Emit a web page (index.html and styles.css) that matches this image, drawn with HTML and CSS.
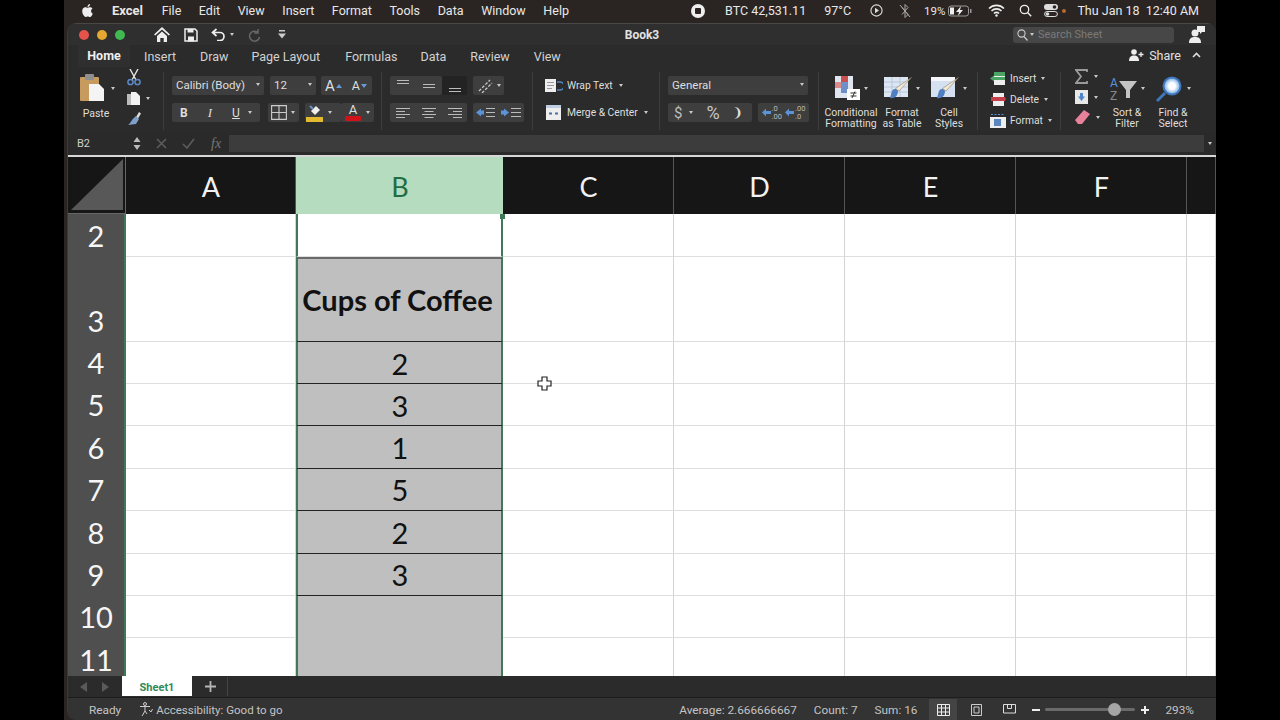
FILE: index.html
```html
<!DOCTYPE html>
<html>
<head>
<title>Book3</title>
<link rel="stylesheet" href="styles.css">
</head>
<body>
<div class="screen">

  <!-- mac menu bar -->
  <div class="menubar">
    <svg class="apple" viewBox="0 0 24 24"><path fill="#eee" d="M12.152 6.896c-.948 0-2.415-1.078-3.96-1.04-2.04.027-3.91 1.183-4.961 3.014-2.117 3.675-.546 9.103 1.519 12.09 1.013 1.454 2.208 3.09 3.792 3.039 1.52-.065 2.09-.987 3.935-.987 1.831 0 2.35.987 3.96.948 1.637-.026 2.676-1.48 3.676-2.948 1.156-1.688 1.636-3.325 1.662-3.415-.039-.013-3.182-1.221-3.22-4.857-.026-3.04 2.48-4.494 2.597-4.559-1.429-2.09-3.623-2.324-4.39-2.376-2-.156-3.675 1.09-4.61 1.09zM15.53 3.83c.843-1.012 1.4-2.427 1.245-3.83-1.207.052-2.662.805-3.532 1.818-.78.896-1.454 2.338-1.273 3.714 1.338.104 2.715-.688 3.559-1.701"/></svg>
    <div class="menu-items">
      <b>Excel</b><span>File</span><span>Edit</span><span>View</span><span>Insert</span><span>Format</span><span>Tools</span><span>Data</span><span>Window</span><span>Help</span>
    </div>
    <div class="menu-status">
      <svg class="st-record" width="14" height="14" viewBox="0 0 14 14"><circle cx="7" cy="7" r="7" fill="#eee"/><rect x="4" y="4" width="6" height="6" rx="1" fill="#2a2523"/></svg>
      <span class="st-btc">BTC 42,531.11</span>
      <span class="st-temp">97°C</span>
      <svg class="st-play" width="13" height="13" viewBox="0 0 13 13"><circle cx="6.5" cy="6.5" r="5.6" fill="none" stroke="#ddd" stroke-width="1.1"/><path d="M5 3.8l4 2.7-4 2.7z" fill="#ddd"/></svg>
      <svg class="st-bt" width="12" height="14" viewBox="0 0 12 14"><path d="M3 3.5l6 7-3 3V.5l3 3-6 7" fill="none" stroke="#aaa" stroke-width="1"/><path d="M1 1l10 12" stroke="#aaa"/></svg>
      <span class="st-pct">19%</span>
      <svg class="st-batt" width="24" height="12" viewBox="0 0 24 12"><rect x=".5" y="1" width="20" height="10" rx="2.5" fill="none" stroke="#999"/><rect x="2" y="2.5" width="4" height="7" fill="#eee"/><path d="M13 1L8 7h3l-1 4 5-6h-3z" fill="#eee"/><rect x="22" y="4" width="1.5" height="4" fill="#999"/></svg>
      <svg class="st-wifi" width="17" height="13" viewBox="0 0 17 13"><path d="M1 4.500a10.500 10.500 0 0 1 15 0M3.500 7a7 7 0 0 1 10 0M6 9.500a3.400 3.400 0 0 1 5 0" fill="none" stroke="#eee" stroke-width="1.600"/><circle cx="8.500" cy="11.500" r="1.200" fill="#eee"/></svg>
      <svg class="st-search" width="13" height="13" viewBox="0 0 13 13"><circle cx="5.500" cy="5.500" r="4.200" fill="none" stroke="#eee" stroke-width="1.300"/><path d="M8.600 8.600l3.600 3.600" stroke="#eee" stroke-width="1.400"/></svg>
      <svg class="st-ctl" width="14" height="13" viewBox="0 0 14 13"><rect x="0" y="0" width="14" height="6" rx="3" fill="#ddd"/><circle cx="10.500" cy="3" r="1.800" fill="#2a2523"/><rect x=".6" y="7.500" width="12.800" height="5" rx="2.500" fill="none" stroke="#ddd"/><circle cx="3.500" cy="10" r="1.800" fill="#ddd"/></svg>
      <span class="st-dot"></span>
      <span class="st-date">Thu Jan 18&nbsp; 12:40 AM</span>
    </div>
  </div>

  <div class="window">

    <div class="titlebar">
      <div class="title-left">
        <div class="lights"><i class="red"></i><i class="yellow"></i><i class="green"></i></div>
        <svg class="qa-home" width="16" height="15" viewBox="0 0 16 15"><path d="M8 0L0 7.500l1.200 1.100L8 2.400l6.800 6.200L16 7.500z" fill="#eee"/><path d="M3 9l5-4.500L13 9v6H9.700v-4H6.300v4H3z" fill="#eee"/></svg>
        <svg class="qa-save" width="14" height="14" viewBox="0 0 14 14"><path d="M1 1h10l2 2v10H1z" fill="none" stroke="#eee" stroke-width="1.500"/><rect x="3.500" y="1" width="6" height="3.500" fill="#eee"/><rect x="4" y="8.500" width="6" height="5" fill="#eee"/></svg>
        <svg class="qa-undo" width="15" height="13" viewBox="0 0 15 13"><path d="M5.500 1L1.500 4.500 5.500 8M2 4.500h7a4 4 0 0 1 0 8H6" fill="none" stroke="#eee" stroke-width="1.700"/></svg>
        <i class="caret qa-caret"></i>
        <svg class="qa-redo" width="14" height="14" viewBox="0 0 14 14"><path d="M10 1v4H6M10 4.500A5 5 0 1 0 11.500 9" fill="none" stroke="#666" stroke-width="1.500"/></svg>
        <svg class="qa-more" width="8" height="9" viewBox="0 0 8 9"><rect x="1" y="0" width="6" height="1.500" fill="#ccc"/><path d="M0 3.500h8L4 8.500z" fill="#ccc"/></svg>
      </div>
      <div class="doc-title">Book3</div>
      <div class="title-right">
        <div class="search">
          <svg width="11" height="12" viewBox="0 0 11 12"><circle cx="4.500" cy="4.500" r="3.600" fill="none" stroke="#ccc" stroke-width="1.100"/><path d="M7 7.500l3.500 4" stroke="#ccc" stroke-width="1.200"/></svg>
          <i class="caret"></i>
          <span>Search Sheet</span>
        </div>
        <svg class="profile" width="16" height="17" viewBox="0 0 16 17"><circle cx="6" cy="7" r="3.500" fill="#eee"/><path d="M0 17c0-5 2.500-6 6-6s6 1 6 6z" fill="#eee"/><path d="M8 0h8v6h-3l-2 2V6H8z" fill="#eee"/></svg>
      </div>
    </div>

    <div class="tabs">
      <div class="tab tab-home">Home</div>
      <div class="tab t-insert">Insert</div>
      <div class="tab t-draw">Draw</div>
      <div class="tab t-page">Page Layout</div>
      <div class="tab t-formulas">Formulas</div>
      <div class="tab t-data">Data</div>
      <div class="tab t-review">Review</div>
      <div class="tab t-view">View</div>
      <div class="share">
        <svg width="15" height="12" viewBox="0 0 15 12"><circle cx="5" cy="3" r="2.800" fill="#eee"/><path d="M0 12c0-4 2-5.500 5-5.500s5 1.500 5 5.500z" fill="#eee"/><path d="M9.500 5.500h5M12 3v5" stroke="#eee" stroke-width="1.300"/></svg>
        <span>Share</span>
        <svg class="chev" width="9" height="6" viewBox="0 0 9 6"><path d="M1 5l3.500-3.500L8 5" fill="none" stroke="#ddd" stroke-width="1.600"/></svg>
      </div>
    </div>

    <div class="ribbon">

      <div class="group g-clip">
        <div class="paste">
          <div class="paste-top">
            <svg width="25" height="28" viewBox="0 0 25 28"><rect x="0" y="3" width="19" height="24" rx="1" fill="#c79a5e"/><rect x="5" y="0" width="9" height="6" rx="1" fill="#8f8f8f"/><path d="M9 10h10l5 5v12H9z" fill="#f4f4f4"/></svg>
            <i class="caret"></i>
          </div>
          <div class="paste-label">Paste</div>
        </div>
        <div class="clip-tools">
          <svg width="14" height="17" viewBox="0 0 14 17"><path d="M3 0l6 11M11 0L5 11" stroke="#e4e4e4" stroke-width="1.400"/><circle cx="3.500" cy="13" r="2.600" fill="none" stroke="#5d8ac7" stroke-width="1.500"/><circle cx="10.500" cy="13" r="2.600" fill="none" stroke="#5d8ac7" stroke-width="1.500"/></svg>
          <div class="clip-row">
            <svg width="13" height="15" viewBox="0 0 13 15"><rect x="0" y="3" width="8" height="11" fill="#bbb"/><path d="M4 1h5l4 4v9H4z" fill="#f2f2f2"/></svg>
            <i class="caret"></i>
          </div>
          <svg width="15" height="15" viewBox="0 0 15 15"><path d="M9 6l3-5 2 1.500-3 5z" fill="#ddd"/><path d="M9 5l3 3-3 5-8 1c3-2 3-5 8-9z" fill="#7ea0c9"/></svg>
        </div>
      </div>

      <div class="group g-font">
        <div class="row">
          <div class="ctl sel-font"><span>Calibri (Body)</span><i class="caret"></i></div>
          <div class="ctl sel-size"><span>12</span><i class="caret"></i></div>
          <div class="ctl grow-box">
            <span class="big-a">A</span><i class="up"></i>
            <span class="small-a">A</span><i class="down"></i>
          </div>
        </div>
        <div class="row">
          <div class="ctl biu"><b>B</b><em>I</em><u>U</u><i class="caret"></i></div>
          <div class="ctl border-box">
            <svg width="16" height="15" viewBox="0 0 16 15"><path d="M.6.6h14.800v13.800H.6zM8 .6v13.800M.6 7.500h14.800" fill="none" stroke="#ccc" stroke-width="1.100"/></svg>
            <i class="caret"></i>
          </div>
          <div class="ctl fill-box">
            <svg width="17" height="18" viewBox="0 0 17 18"><path d="M5 7l5-5 4 4-5 5z" fill="#eee"/><path d="M4 2l3 3" stroke="#6a93c9" stroke-width="2"/><rect x="0" y="13" width="17" height="5" fill="#e3b92f"/></svg>
            <i class="caret"></i>
          </div>
          <div class="ctl color-box">
            <div class="color-a"><span>A</span><i></i></div>
            <i class="caret"></i>
          </div>
        </div>
      </div>

      <div class="group g-align">
        <div class="row">
          <div class="ctl va-box">
            <svg width="26" height="19" viewBox="0 0 26 19"><path d="M7 4.500h12M7 7.500h12" stroke="#bbb" stroke-width="1.100"/></svg>
            <svg width="26" height="19" viewBox="0 0 26 19"><path d="M7 8.500h12M7 11.500h12" stroke="#bbb" stroke-width="1.100"/></svg>
          </div>
          <div class="ctl va-on">
            <svg width="25" height="19" viewBox="0 0 25 19"><path d="M7 12.500h12M7 15.500h12" stroke="#bbb" stroke-width="1.100"/></svg>
          </div>
          <div class="ctl orient">
            <svg width="17" height="15" viewBox="0 0 17 15"><path d="M2 13L13 2M5 15L15 5" stroke="#c9c9c9" stroke-width="1.300" stroke-dasharray="3 1.500"/></svg>
            <i class="caret"></i>
          </div>
        </div>
        <div class="row">
          <div class="ctl ha-box">
            <svg width="26" height="19" viewBox="0 0 26 19"><path d="M6 5.500h14M6 8.500h9M6 11.500h14M6 14.500h9" stroke="#bbb"/></svg>
            <svg width="26" height="19" viewBox="0 0 26 19"><path d="M6 5.500h14M8.500 8.500h9M6 11.500h14M8.500 14.500h9" stroke="#bbb"/></svg>
            <svg width="25" height="19" viewBox="0 0 25 19"><path d="M6 5.500h14M11 8.500h9M6 11.500h14M11 14.500h9" stroke="#bbb"/></svg>
          </div>
          <div class="ctl indent-box">
            <svg width="25" height="19" viewBox="0 0 25 19"><path d="M13 5.500h9M13 9.500h9M13 13.500h9" stroke="#bbb"/><path d="M3 9.500l5-4v8z" fill="#5b93d6"/><path d="M8 7.500h3v4H8z" fill="#5b93d6"/></svg>
            <svg width="26" height="19" viewBox="0 0 26 19"><path d="M13 5.500h10M13 9.500h10M13 13.500h10" stroke="#bbb"/><path d="M11 9.500l-5-4v8z" fill="#5b93d6"/><path d="M3 7.500h3v4H3z" fill="#5b93d6"/></svg>
          </div>
        </div>
      </div>

      <div class="group g-wrap">
        <div class="row wrap-row">
          <svg width="18" height="15" viewBox="0 0 18 15"><rect x="0" y="1" width="11" height="13" fill="#eee"/><path d="M2 4.500h7M2 7.500h7M2 10.500h5" stroke="#999"/><path d="M12 4h3a2.500 2.500 0 0 1 0 8h-3" fill="none" stroke="#4f86c8" stroke-width="1.600"/></svg>
          <span>Wrap Text</span><i class="caret"></i>
        </div>
        <div class="row wrap-row">
          <svg width="18" height="15" viewBox="0 0 18 15"><rect x="1" y="0" width="15" height="15" fill="#eee"/><rect x="1" y="0" width="15" height="3" fill="#bfcfe3"/><path d="M4 8.500h3M10 8.500h3" stroke="#47719f" stroke-width="2"/></svg>
          <span>Merge &amp; Center</span><i class="caret"></i>
        </div>
      </div>

      <div class="group g-num">
        <div class="row">
          <div class="ctl sel-num"><span>General</span><i class="caret"></i></div>
        </div>
        <div class="row">
          <div class="ctl money">
            <span class="dollar">$</span><i class="caret"></i>
            <span class="pct">%</span>
            <span class="comma">❩</span>
          </div>
          <div class="ctl dec-box">
            <div class="dec"><svg width="9" height="9" viewBox="0 0 9 9"><path d="M0 4.500l4-4v2.500h5v3H4v2.500z" fill="#5b93d6"/></svg><span>.0<br>.00</span></div>
            <div class="dec"><svg width="9" height="9" viewBox="0 0 9 9"><path d="M0 4.500l4-4v2.500h5v3H4v2.500z" fill="#5b93d6"/></svg><span>.00<br>.0</span></div>
          </div>
        </div>
      </div>

      <div class="group g-styles">
        <div class="big-btn b-cond">
          <div class="big-icon">
            <svg width="25" height="24" viewBox="0 0 25 24"><rect x="0" y="0" width="18" height="22" fill="#dfe6f0"/><rect x="6" y="0" width="7" height="9" fill="#c9504f"/><rect x="6" y="6" width="7" height="11" fill="#6f8fc9"/><rect x="0" y="6" width="6" height="6" fill="#d98a8a"/><rect x="12" y="13" width="13" height="11" fill="#fff"/><path d="M15.500 17h6M15.500 20h6M20 15.500l-3 6.500" stroke="#333"/></svg>
            <i class="caret"></i>
          </div>
          <div class="big-label">Conditional<br>Formatting</div>
        </div>
        <div class="big-btn b-table">
          <div class="big-icon">
            <svg width="28" height="25" viewBox="0 0 28 25"><rect x="0" y="1" width="24" height="20" fill="#dde6f3"/><path d="M0 6h24M0 11h24M0 16h24M8 1v20M16 1v20" stroke="#b9c6db"/><path d="M27.500 1.500L15 15l-3.500-2.500z" fill="#f2ead6" stroke="#8f8468" stroke-width=".6"/><path d="M14 15c-2-3-5-2-6 0l-2 7c4 1 8-2 8-7z" fill="#4f7fc0"/></svg>
            <i class="caret"></i>
          </div>
          <div class="big-label">Format<br>as Table</div>
        </div>
        <div class="big-btn b-cell">
          <div class="big-icon">
            <svg width="28" height="25" viewBox="0 0 28 25"><rect x="0" y="1" width="24" height="20" fill="#d5e0f0"/><rect x="0" y="1" width="24" height="4" fill="#f4f6fa"/><path d="M27.500 1.500L15 15l-3.500-2.500z" fill="#f2ead6" stroke="#8f8468" stroke-width=".6"/><path d="M14 15c-2-3-5-2-6 0l-2 7c4 1 8-2 8-7z" fill="#4f7fc0"/></svg>
            <i class="caret"></i>
          </div>
          <div class="big-label">Cell<br>Styles</div>
        </div>
      </div>

      <div class="group g-cells">
        <div class="cell-btn">
          <svg width="16" height="15" viewBox="0 0 16 15"><rect x="4" y="1" width="11" height="13" fill="#eee"/><rect x="4" y="1" width="11" height="4" fill="#4aa463"/><rect x="4" y="6" width="11" height="3" fill="#4aa463"/><path d="M0 7.500l4-3v6z" fill="#4aa463"/></svg>
          <span>Insert</span><i class="caret"></i>
        </div>
        <div class="cell-btn">
          <svg width="16" height="15" viewBox="0 0 16 15"><rect x="3" y="1" width="11" height="13" fill="#eee"/><rect x="1" y="5" width="14" height="4" fill="#c4404a"/><path d="M15 5l1 2-1 2z" fill="#c4404a"/></svg>
          <span>Delete</span><i class="caret"></i>
        </div>
        <div class="cell-btn">
          <svg width="16" height="15" viewBox="0 0 16 15"><path d="M1 1.500h14" stroke="#5b93d6" stroke-dasharray="2 1.500"/><rect x="0" y="4" width="16" height="11" fill="#eee"/><rect x="4" y="6" width="7" height="7" fill="#5b86bd"/></svg>
          <span>Format</span><i class="caret"></i>
        </div>
      </div>

      <div class="group g-edit">
        <div class="edit-tools">
          <div class="clip-row">
            <svg width="13" height="15" viewBox="0 0 13 15"><path d="M12 3V1H1l5 6.500L1 14h11v-2" fill="none" stroke="#9a9a9a" stroke-width="1.800"/></svg>
            <i class="caret"></i>
          </div>
          <div class="clip-row">
            <svg width="13" height="14" viewBox="0 0 13 14"><rect x="0" y="0" width="13" height="14" fill="#e8e8e8"/><path d="M6.500 11L3 6.500h2V3h3v3.500h2z" fill="#4f86c8"/></svg>
            <i class="caret"></i>
          </div>
          <div class="clip-row">
            <svg width="15" height="14" viewBox="0 0 15 14"><path d="M9 0l6 4-8 10H3L0 10z" fill="#e8829b"/></svg>
            <i class="caret"></i>
          </div>
        </div>
        <div class="big-btn b-sort">
          <div class="big-icon">
            <svg width="27" height="26" viewBox="0 0 27 26"><text x="0" y="11" class="az-a">A</text><text x="0" y="24" class="az-z">Z</text><path d="M9 5h18l-7 9v8h-4v-8z" fill="#c4c4c4"/></svg>
            <i class="caret"></i>
          </div>
          <div class="big-label">Sort &amp;<br>Filter</div>
        </div>
        <div class="big-btn b-find">
          <div class="big-icon">
            <svg width="27" height="27" viewBox="0 0 27 27"><defs><radialGradient id="glass"><stop offset="45%" stop-color="#fbfdff"/><stop offset="100%" stop-color="#86b4e6"/></radialGradient></defs><circle cx="16" cy="10" r="9.500" fill="#3f77bd"/><circle cx="16" cy="10" r="7.500" fill="url(#glass)"/><path d="M9 17l-8 8" stroke="#3f77bd" stroke-width="3"/></svg>
            <i class="caret"></i>
          </div>
          <div class="big-label">Find &amp;<br>Select</div>
        </div>
      </div>
    </div>

    <div class="formula">
      <div class="name-box">B2</div>
      <svg class="stepper" width="8" height="15" viewBox="0 0 8 15"><path d="M4 1l3.500 5H.5zM4 14L.5 9h7z" fill="#bbb"/></svg>
      <svg class="f-x" width="11" height="11" viewBox="0 0 11 11"><path d="M1 1l9 9M10 1l-9 9" stroke="#5c5c5c" stroke-width="1.600"/></svg>
      <svg class="f-check" width="13" height="11" viewBox="0 0 13 11"><path d="M1 6l4 4 7-9" fill="none" stroke="#5c5c5c" stroke-width="1.600"/></svg>
      <span class="f-fx">fx</span>
      <div class="f-input"></div>
      <i class="caret f-caret"></i>
    </div>

    <div class="sheet">
      <div class="grid">
        <div class="corner"><svg width="56" height="54" viewBox="0 0 56 54"><path d="M55 2v51H3z" fill="#585858"/></svg></div>
        <div class="col-head">A</div>
        <div class="col-head on">B</div>
        <div class="col-head">C</div>
        <div class="col-head">D</div>
        <div class="col-head">E</div>
        <div class="col-head">F</div>
        <div class="col-head"></div>

        <div class="row-head">2</div>
        <div class="cell"></div><div class="cell b-col"></div><div class="cell"></div><div class="cell"></div><div class="cell"></div><div class="cell"></div><div class="cell"></div>

        <div class="row-head">3</div>
        <div class="cell"></div><div class="cell b-col sel title-cell">Cups of Coffee</div><div class="cell"></div><div class="cell"></div><div class="cell"></div><div class="cell"></div><div class="cell"></div>

        <div class="row-head">4</div>
        <div class="cell"></div><div class="cell b-col sel">2</div><div class="cell"></div><div class="cell"></div><div class="cell"></div><div class="cell"></div><div class="cell"></div>

        <div class="row-head">5</div>
        <div class="cell"></div><div class="cell b-col sel">3</div><div class="cell"></div><div class="cell"></div><div class="cell"></div><div class="cell"></div><div class="cell"></div>

        <div class="row-head">6</div>
        <div class="cell"></div><div class="cell b-col sel">1</div><div class="cell"></div><div class="cell"></div><div class="cell"></div><div class="cell"></div><div class="cell"></div>

        <div class="row-head">7</div>
        <div class="cell"></div><div class="cell b-col sel">5</div><div class="cell"></div><div class="cell"></div><div class="cell"></div><div class="cell"></div><div class="cell"></div>

        <div class="row-head">8</div>
        <div class="cell"></div><div class="cell b-col sel">2</div><div class="cell"></div><div class="cell"></div><div class="cell"></div><div class="cell"></div><div class="cell"></div>

        <div class="row-head">9</div>
        <div class="cell"></div><div class="cell b-col sel">3</div><div class="cell"></div><div class="cell"></div><div class="cell"></div><div class="cell"></div><div class="cell"></div>

        <div class="row-head">10</div>
        <div class="cell"></div><div class="cell b-col sel empty"></div><div class="cell"></div><div class="cell"></div><div class="cell"></div><div class="cell"></div><div class="cell"></div>

        <div class="row-head">11</div>
        <div class="cell"></div><div class="cell b-col sel empty"></div><div class="cell"></div><div class="cell"></div><div class="cell"></div><div class="cell"></div><div class="cell"></div>
      </div>
      <div class="handle"></div>
      <svg class="cursor" width="15" height="15" viewBox="0 0 15 15"><path d="M5 1h5v4h4v5h-4v4H5v-4H1V5h4z" fill="#fff" stroke="#222" stroke-width="1.200"/></svg>
    </div>

    <div class="sheetbar">
      <svg class="arrow" width="8" height="10" viewBox="0 0 8 10"><path d="M7 0v10L0 5z" fill="#5a5a5a"/></svg>
      <svg class="arrow" width="8" height="10" viewBox="0 0 8 10"><path d="M1 0v10l7-5z" fill="#5a5a5a"/></svg>
      <div class="sheet-tab">Sheet1</div>
      <svg class="add" width="11" height="11" viewBox="0 0 11 11"><path d="M5.500 0v11M0 5.500h11" stroke="#b5b5b5" stroke-width="1.800"/></svg>
      <div class="bar-sep"></div>
    </div>

    <div class="statusbar">
      <span class="ready">Ready</span>
      <svg class="a11y" width="14" height="15" viewBox="0 0 14 15"><circle cx="6" cy="2" r="1.500" fill="none" stroke="#ccc"/><path d="M1 4.500h10M6 5v4M6 9l-3 5M6 9l2 3M10 8l2 2 1.500-3" fill="none" stroke="#ccc"/></svg>
      <span class="a11y-text">Accessibility: Good to go</span>
      <div class="stats">
        <span>Average: 2.666666667</span>
        <span>Count: 7</span>
        <span>Sum: 16</span>
      </div>
      <div class="views">
        <div class="view on"><svg width="13" height="12" viewBox="0 0 13 12"><path d="M.5.500h12v11H.5zM.5 4h12M.5 8h12M4.500.5v11M8.500.5v11" fill="none" stroke="#eee"/></svg></div>
        <div class="view"><svg width="11" height="12" viewBox="0 0 11 12"><path d="M.5.500h10v11H.5zM3 3h5v6H3z" fill="none" stroke="#ccc"/></svg></div>
        <div class="view"><svg width="13" height="12" viewBox="0 0 13 12"><path d="M.5 9V.5h12V9zM4.500.5v4h4v-4" fill="none" stroke="#ddd"/></svg></div>
      </div>
      <svg class="z-minus" width="8" height="2" viewBox="0 0 8 2"><rect width="8" height="2" fill="#eee"/></svg>
      <div class="slider"><i></i></div>
      <svg class="z-plus" width="8" height="8" viewBox="0 0 8 8"><path d="M4 0v8M0 4h8" stroke="#eee" stroke-width="2"/></svg>
      <span class="zoom-pct">293%</span>
    </div>
  </div>
</div>
</body>
</html>
```

FILE: styles.css
```css
body {
  margin: 0;
  background-color: #000;
  font-family: "Roboto", "Liberation Sans", sans-serif;
  color: #dcdcdc;
}

.screen {
  width: 1152px;
  height: 720px;
  margin-left: 64px;
  display: flex;
  flex-direction: column;
  overflow: hidden;
  background-color: #2a2523;
}

.caret {
  display: inline-block;
  width: 0;
  height: 0;
  border-left: 2.5px solid transparent;
  border-right: 2.5px solid transparent;
  border-top: 3.5px solid #c8c8c8;
}

/* menu bar */
.menubar {
  height: 23px;
  flex: none;
  box-sizing: border-box;
  display: flex;
  align-items: center;
  padding: 0 17px 2px 17px;
  font-size: 12.5px;
  color: #e8e8e8;
}

.apple {
  width: 13px;
  height: 15px;
  margin-right: 18px;
}

.menu-items {
  display: flex;
  gap: 17.6px;
}

.menu-items b {
  font-size: 13px;
  margin-right: 1px;
}

.menu-status {
  margin-left: auto;
  display: flex;
  align-items: center;
}

.st-btc { margin-left: 20px; }
.st-temp { margin-left: 18px; }
.st-play { margin-left: 19px; }
.st-bt { margin-left: 16px; }
.st-pct { margin-left: 13px; font-size: 11.5px; }
.st-batt { margin-left: 3px; }
.st-wifi { margin-left: 16px; }
.st-search { margin-left: 14px; }
.st-ctl { margin-left: 12px; }
.st-date { margin-left: 11px; }

.st-dot {
  width: 4px;
  height: 4px;
  margin-left: 4px;
  border-radius: 50%;
  background-color: #b5692c;
}

/* window */
.window {
  flex: 1;
  min-height: 0;
  margin-left: 4px;
  display: flex;
  flex-direction: column;
  overflow: hidden;
  background-color: #2b2b2b;
  border-radius: 9px 9px 0 9px;
  box-shadow: -1px 0 0 #3a3a3a;
}

.titlebar {
  height: 22px;
  flex: none;
  box-sizing: border-box;
  padding-top: 1px;
  display: grid;
  grid-template-columns: 1fr auto 1fr;
  align-items: center;
  background-color: #2f2f2f;
  box-shadow: inset 0 1px 0 #484848;
}

.title-left {
  display: flex;
  align-items: center;
  padding-left: 11px;
}

.lights {
  display: flex;
  gap: 8px;
  margin-right: 29px;
}

.lights i {
  width: 10px;
  height: 10px;
  border-radius: 50%;
}

.lights .red { background-color: #e5534b; }
.lights .yellow { background-color: #e5a72f; }
.lights .green { background-color: #3fb950; }

.qa-save { margin-left: 14px; }
.qa-undo { margin-left: 13px; }
.qa-caret { margin-left: 4px; }
.qa-redo { margin-left: 14px; }
.qa-more { margin-left: 16px; }

.doc-title {
  font-size: 12px;
  font-weight: 700;
  color: #e2e2e2;
}

.title-right {
  display: flex;
  align-items: center;
  justify-content: flex-end;
  padding-right: 11px;
}

.search {
  width: 161px;
  height: 16px;
  margin-right: 15px;
  padding-left: 4px;
  box-sizing: border-box;
  display: flex;
  align-items: center;
  gap: 2px;
  background-color: #474747;
  border-radius: 3px;
  font-size: 11px;
  color: #7a7a7a;
}

.search span {
  margin-left: 2px;
}

.tabs {
  height: 22px;
  flex: none;
  display: flex;
  align-items: center;
  padding-right: 15px;
  font-size: 12.5px;
  color: #d2d2d2;
}

.tab { white-space: nowrap; }

.tab-home {
  width: 52px;
  height: 22px;
  margin-left: 10px;
  line-height: 22px;
  text-align: center;
  font-weight: 700;
  font-size: 12.5px;
  color: #f0f0f0;
  background-color: #2f2f2f;
}

.t-insert { margin-left: 14px; }
.t-draw { margin-left: 24px; }
.t-page { margin-left: 23px; }
.t-formulas { margin-left: 25px; }
.t-data { margin-left: 23px; }
.t-review { margin-left: 24px; }
.t-view { margin-left: 24px; }

.share {
  margin-left: auto;
  padding-bottom: 2px;
  display: flex;
  align-items: center;
  gap: 5px;
  font-size: 12.5px;
  color: #e0e0e0;
}

.chev { margin-left: 6px; }

/* ribbon */
.ribbon {
  height: 65px;
  flex: none;
  display: flex;
  background-color: #2b2b2b;
}

.group {
  height: 58px;
  margin-top: 5px;
  box-sizing: border-box;
  flex: none;
  border-right: 1px solid #3e3e3e;
}

.g-clip { width: 96px; padding-left: 12px; display: flex; }
.g-font { width: 218px; padding: 4px 0 0 8px; }
.g-align { width: 151px; padding: 4px 0 0 8px; }
.g-wrap { width: 127px; padding: 4px 0 0 12px; }
.g-num { width: 159px; padding: 4px 0 0 8px; }
.g-styles { width: 159px; padding-left: 6px; display: flex; }
.g-cells { width: 83px; padding-left: 12px; }
.g-edit { width: 155px; padding-left: 14px; display: flex; border-right: none; }

.row {
  height: 19px;
  margin-bottom: 8px;
  display: flex;
  gap: 6px;
}

.ctl {
  height: 19px;
  box-sizing: border-box;
  display: flex;
  align-items: center;
  background-color: #3e3e3e;
  border-radius: 2px;
  font-size: 11.5px;
  color: #dedede;
}

.paste {
  width: 47px;
  padding-top: 2px;
}

.paste-top {
  display: flex;
  align-items: center;
  gap: 6px;
}

.paste-label {
  width: 32px;
  margin-top: 5px;
  text-align: center;
  font-size: 10.5px;
  color: #dedede;
}

.clip-tools {
  width: 24px;
  margin-top: -3px;
  display: flex;
  flex-direction: column;
  gap: 5px;
}

.clip-row {
  display: flex;
  align-items: center;
  gap: 6px;
}

.sel-font {
  width: 92px;
  padding: 0 4px 2px 4px;
  justify-content: space-between;
}

.sel-size {
  width: 46px;
  padding: 0 4px 2px 4px;
  justify-content: space-between;
}

.grow-box {
  width: 51px;
  margin-left: -1px;
  padding-left: 4px;
}

.big-a { font-size: 15px; }
.small-a { font-size: 12.5px; margin-left: 10px; }

.up, .down {
  width: 0;
  height: 0;
  margin-left: 1px;
  border-left: 3px solid transparent;
  border-right: 3px solid transparent;
}

.up { border-bottom: 4px solid #6a9ad6; }
.down { border-top: 4px solid #6a9ad6; }

.biu {
  width: 88px;
  padding-left: 8px;
  font-size: 12px;
}

.biu em {
  margin-left: 20px;
  font-family: "Liberation Serif", serif;
  font-size: 13px;
}

.biu u { margin-left: 20px; }
.biu .caret { margin-left: 8px; }

.border-box {
  width: 31px;
  margin-left: 2px;
  padding-left: 3px;
  gap: 4px;
}

.fill-box {
  width: 36px;
  margin-right: -6px;
  padding-left: 1px;
  gap: 5px;
}

.color-box {
  width: 33px;
  padding-left: 4px;
  gap: 5px;
}

.color-a {
  width: 16px;
  text-align: center;
  font-size: 13px;
  line-height: 12px;
}

.color-a span { display: block; }

.color-a i {
  display: block;
  height: 5px;
  background-color: #d0121b;
  border-radius: 1px;
}

.va-box { width: 52px; margin-right: -6px; }
.va-on { width: 25px; background-color: #232323; }

.orient {
  width: 31px;
  padding-left: 4px;
  gap: 3px;
}

.ha-box { width: 77px; }
.indent-box { width: 51px; }

.wrap-row {
  align-items: center;
  gap: 4px;
  font-size: 10.3px;
  color: #dedede;
}

.wrap-row .caret { margin-left: 2px; }

.sel-num {
  width: 140px;
  padding: 0 4px 2px 4px;
  justify-content: space-between;
}

.money {
  width: 84px;
  padding-left: 6px;
}

.dollar { font-size: 15px; color: #bdbdbd; }
.money .caret { margin-left: 7px; }
.pct { margin-left: 13px; font-size: 18px; color: #c9c9c9; }
.comma { margin-left: 12px; font-size: 13px; }

.dec-box {
  width: 51px;
  padding: 0 2px;
  gap: 3px;
  justify-content: center;
}

.dec {
  display: flex;
  align-items: center;
  gap: 1px;
  font-size: 7.5px;
  line-height: 8px;
  color: #bcbcbc;
}

.big-btn {
  display: flex;
  flex-direction: column;
  align-items: center;
  padding-top: 4px;
}

.b-cond { width: 52px; }
.b-table { width: 50px; }
.b-cell { width: 44px; }
.b-sort { width: 46px; }
.b-find { width: 46px; }

.big-icon {
  height: 31px;
  display: flex;
  align-items: flex-start;
  gap: 4px;
}

.big-icon .caret { margin-top: 11px; }

.big-label {
  font-size: 10.5px;
  line-height: 11px;
  text-align: center;
  white-space: nowrap;
  color: #dedede;
}

.cell-btn {
  height: 21px;
  display: flex;
  align-items: center;
  gap: 4px;
  font-size: 10.3px;
  color: #dedede;
}

.cell-btn:first-child { margin-top: -4px; }
.cell-btn .caret { margin-left: 1px; }

.edit-tools {
  width: 29px;
  margin-top: -3px;
  display: flex;
  flex-direction: column;
  gap: 6px;
}

.az-a {
  font-size: 12px;
  fill: #5b93d6;
}

.az-z {
  font-size: 12px;
  fill: #888;
}

/* formula bar */
.formula {
  height: 23px;
  flex: none;
  display: flex;
  align-items: center;
  background-color: #2a2a2a;
  font-size: 11px;
}

.name-box {
  width: 65px;
  padding-left: 9px;
  box-sizing: border-box;
  color: #d0d0d0;
}

.f-x { margin-left: 15px; }
.f-check { margin-left: 15px; }

.f-fx {
  width: 14px;
  margin-left: 16px;
  font-family: "Liberation Serif", serif;
  font-style: italic;
  font-size: 14px;
  color: #777;
}

.f-input {
  flex: 1;
  height: 17px;
  margin-left: 4px;
  background-color: #3c3c3c;
}

.f-caret {
  margin: 0 4px 0 4px;
}

/* sheet */
.sheet {
  flex: 1;
  min-height: 0;
  position: relative;
  overflow: hidden;
  border-top: 2px solid #d8d8d8;
  background-color: #fff;
}

.grid {
  display: grid;
  grid-template-columns: 58px 170px 207px 171px 171px 171px 171px 29px;
  grid-template-rows: 57px 43px 85px 42px 42.4px 42.4px 42.4px 42.4px 42.4px 42.4px 42.4px;
  font-family: "Lato", "Open Sans", sans-serif;
}

.corner {
  background-color: #161616;
  border-right: 1px solid #666;
  border-bottom: 1px solid #666;
  box-sizing: border-box;
}

.col-head {
  display: flex;
  align-items: center;
  justify-content: center;
  box-sizing: border-box;
  padding: 2px 0 0 1px;
  background-color: #161616;
  border-right: 1px solid #555;
  font-size: 27px;
  color: #f2f2f2;
}

.col-head.on {
  background-color: #b5dcbf;
  color: #1f6e43;
  border-right: none;
}

.row-head {
  display: flex;
  align-items: flex-end;
  justify-content: center;
  box-sizing: border-box;
  padding-bottom: 2px;
  background-color: #4f4f4f;
  border-right: 2px solid #3f7a58;
  font-size: 29px;
  line-height: 38px;
  color: #f6f6f6;
}

.cell {
  display: flex;
  align-items: center;
  justify-content: center;
  box-sizing: border-box;
  padding-top: 1px;
  border-right: 1px solid #d4d4d4;
  border-bottom: 1px solid #dedede;
  font-size: 29px;
  color: #111;
}

.b-col {
  padding-left: 1px;
  border-left: 2px solid #3f7a58;
  border-right: 2px solid #3f7a58;
}

.sel {
  background-color: #bfbfbf;
  background-clip: padding-box;
  border-bottom: 1px solid #222;
}

.sel.empty {
  border-bottom: none;
}

.title-cell {
  padding-right: 5px;
  font-weight: 700;
  font-size: 29px;
  white-space: nowrap;
  box-shadow: inset 0 2px 0 #6a6a6a;
}

.handle {
  position: absolute;
  left: 432px;
  top: 57px;
  width: 5px;
  height: 5px;
  background-color: #3f7a58;
}

.cursor {
  position: absolute;
  left: 469px;
  top: 219px;
}

/* bottom bars */
.sheetbar {
  height: 22px;
  flex: none;
  display: flex;
  align-items: center;
  padding-left: 12px;
  box-sizing: border-box;
  border-bottom: 1px solid #1d1d1d;
  background-color: #2b2b2b;
}

.arrow + .arrow { margin-left: 13px; }

.sheet-tab {
  width: 70px;
  height: 20px;
  margin-left: 13px;
  align-self: flex-start;
  line-height: 23px;
  text-align: center;
  background-color: #fff;
  font-size: 11px;
  font-weight: 700;
  color: #2f8a5a;
}

.add { margin-left: 13px; }

.bar-sep {
  width: 1px;
  height: 19px;
  margin-left: 11px;
  background-color: #444;
}

.statusbar {
  height: 22px;
  flex: none;
  box-sizing: border-box;
  padding: 1px 0 0 21px;
  display: flex;
  align-items: center;
  background-color: #333;
  font-size: 11.8px;
  color: #c4c4c4;
}

.a11y { margin-left: 18px; }

.a11y-text {
  margin-left: 3px;
  font-size: 11.5px;
}

.stats {
  margin-left: auto;
  display: flex;
  gap: 17px;
}

.views {
  display: flex;
  margin-left: 12px;
}

.view {
  width: 33px;
  height: 21px;
  display: flex;
  align-items: center;
  justify-content: center;
}

.view.on {
  width: 28px;
  margin-right: 3px;
  background-color: #444;
}

.z-minus { margin-left: 6px; }

.slider {
  width: 90px;
  height: 3px;
  margin-left: 5px;
  position: relative;
  background-color: #6a6a6a;
  border-radius: 2px;
}

.slider i {
  position: absolute;
  left: 63px;
  top: -5px;
  width: 13px;
  height: 13px;
  border-radius: 50%;
  background-color: #a5a5a5;
}

.z-plus { margin-left: 6px; }

.zoom-pct {
  margin-left: 16px;
  margin-right: 22px;
}
```
